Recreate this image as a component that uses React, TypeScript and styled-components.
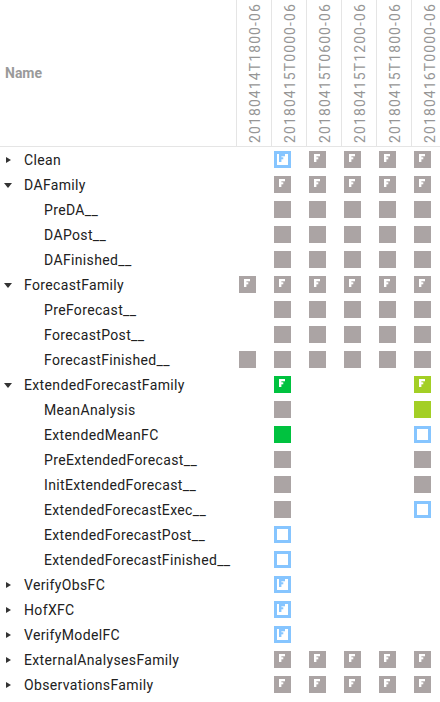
import styled, { createGlobalStyle } from "styled-components";

const GlobalStyle = createGlobalStyle`
  html, body {
    margin: 0;
    padding: 0;
    background: #ffffff;
    overflow: hidden;
  }
  body {
    font-family: Roboto, "Liberation Sans", sans-serif;
  }
`;

type Kind = "gray" | "green" | "lime" | "blue";
type Cell = { kind: Kind; flag?: boolean } | null;

const CYCLES = [
  "20180414T1800-06",
  "20180415T0000-06",
  "20180415T0600-06",
  "20180415T1200-06",
  "20180415T1800-06",
  "20180416T0000-06",
];

const g: Cell = { kind: "gray" };
const gF: Cell = { kind: "gray", flag: true };
const bF: Cell = { kind: "blue", flag: true };
const b: Cell = { kind: "blue" };
const grF: Cell = { kind: "green", flag: true };
const gr: Cell = { kind: "green" };
const lF: Cell = { kind: "lime", flag: true };
const l: Cell = { kind: "lime" };
const _ = null;

type Row = {
  name: string;
  depth: number;
  toggle?: "open" | "closed";
  cells: Cell[];
};

const ROWS: Row[] = [
  { name: "Clean", depth: 0, toggle: "closed", cells: [_, bF, gF, gF, gF, gF] },
  { name: "DAFamily", depth: 0, toggle: "open", cells: [_, gF, gF, gF, gF, gF] },
  { name: "PreDA__", depth: 1, cells: [_, g, g, g, g, g] },
  { name: "DAPost__", depth: 1, cells: [_, g, g, g, g, g] },
  { name: "DAFinished__", depth: 1, cells: [_, g, g, g, g, g] },
  { name: "ForecastFamily", depth: 0, toggle: "open", cells: [gF, gF, gF, gF, gF, gF] },
  { name: "PreForecast__", depth: 1, cells: [_, g, g, g, g, g] },
  { name: "ForecastPost__", depth: 1, cells: [_, g, g, g, g, g] },
  { name: "ForecastFinished__", depth: 1, cells: [g, g, g, g, g, g] },
  { name: "ExtendedForecastFamily", depth: 0, toggle: "open", cells: [_, grF, _, _, _, lF] },
  { name: "MeanAnalysis", depth: 1, cells: [_, g, _, _, _, l] },
  { name: "ExtendedMeanFC", depth: 1, cells: [_, gr, _, _, _, b] },
  { name: "PreExtendedForecast__", depth: 1, cells: [_, g, _, _, _, g] },
  { name: "InitExtendedForecast__", depth: 1, cells: [_, g, _, _, _, g] },
  { name: "ExtendedForecastExec__", depth: 1, cells: [_, g, _, _, _, b] },
  { name: "ExtendedForecastPost__", depth: 1, cells: [_, b, _, _, _, _] },
  { name: "ExtendedForecastFinished__", depth: 1, cells: [_, b, _, _, _, _] },
  { name: "VerifyObsFC", depth: 0, toggle: "closed", cells: [_, bF, _, _, _, _] },
  { name: "HofXFC", depth: 0, toggle: "closed", cells: [_, bF, _, _, _, _] },
  { name: "VerifyModelFC", depth: 0, toggle: "closed", cells: [_, bF, _, _, _, _] },
  { name: "ExternalAnalysesFamily", depth: 0, toggle: "closed", cells: [_, gF, gF, gF, gF, gF] },
  { name: "ObservationsFamily", depth: 0, toggle: "closed", cells: [_, gF, gF, gF, gF, gF] },
];

const FILL: Record<Kind, string> = {
  gray: "#aba4a4",
  green: "#00c23f",
  lime: "#a3cf25",
  blue: "#ffffff",
};

const Table = styled.div`
  width: 446px;
`;

const Header = styled.div`
  display: grid;
  grid-template-columns: 236px repeat(6, 35px);
  height: 146px;
  border-bottom: 1px solid #e5e5e5;
`;

const NameHead = styled.div`
  display: flex;
  align-items: center;
  padding-left: 5px;
  font-size: 14px;
  font-weight: 700;
  color: #9a9a9a;
`;

const CycleHead = styled.div`
  display: flex;
  justify-content: center;
  align-items: flex-end;
  border-left: 1px solid #e5e5e5;
  overflow: hidden;
  padding-bottom: 3px;
  box-sizing: border-box;
`;

const CycleLabel = styled.span`
  writing-mode: vertical-rl;
  transform: rotate(180deg);
  font-size: 14px;
  letter-spacing: 1.1px;
  color: #969696;
  white-space: nowrap;
  margin-left: 1px;
`;

const BodyRow = styled.div`
  display: grid;
  grid-template-columns: 236px repeat(6, 35px);
  height: 25px;
  align-items: center;
`;

const NameCell = styled.div<{ $depth: number }>`
  display: flex;
  align-items: center;
  padding-left: ${(p) => 5 + p.$depth * 20}px;
  font-size: 14px;
  letter-spacing: 0.35px;
  color: #212121;
  white-space: nowrap;
`;

const ToggleSlot = styled.span`
  display: inline-flex;
  align-items: center;
  width: 19px;
  height: 10px;
  flex: none;
`;

const Caret = styled.span<{ $open: boolean }>`
  display: block;
  width: 0;
  height: 0;
  ${(p) =>
    p.$open
      ? `border-top: 5px solid #333; border-left: 4px solid transparent; border-right: 4px solid transparent; margin-left: -1px; margin-top: 1px;`
      : `border-left: 5px solid #333; border-top: 3.5px solid transparent; border-bottom: 3.5px solid transparent; margin-left: 1px;`}
`;

const StatusCell = styled.div`
  display: flex;
  align-items: center;
  padding-left: 3px;
`;

const Square = styled.div<{ $kind: Kind }>`
  box-sizing: border-box;
  width: 17px;
  height: 17px;
  background: ${(p) => FILL[p.$kind]};
  border: ${(p) => (p.$kind === "blue" ? "3px solid #86c5ff" : "none")};
  position: relative;
`;

const FlagGlyph = styled.svg<{ $inset: number }>`
  position: absolute;
  left: ${(p) => -p.$inset}px;
  top: ${(p) => -p.$inset}px;
`;

function Status({ cell }: { cell: Cell }) {
  if (!cell) return <StatusCell />;
  const isBlue = cell.kind === "blue";
  const color = isBlue ? "#86c5ff" : "#ffffff";
  return (
    <StatusCell>
      <Square $kind={cell.kind}>
        {cell.flag && (
          <FlagGlyph
            $inset={isBlue ? 3 : 0}
            width="17"
            height="17"
            viewBox="0 0 17 17"
          >
            <rect x="5" y="3" width="2.4" height="8" fill={color} />
            <rect x="5" y="3" width="6" height="2.3" fill={color} />
            <rect x="5" y="6.3" width="4.3" height="2" fill={color} />
          </FlagGlyph>
        )}
      </Square>
    </StatusCell>
  );
}

export default function App() {
  return (
    <>
      <GlobalStyle />
      <Table>
        <Header>
          <NameHead>Name</NameHead>
          {CYCLES.map((c) => (
            <CycleHead key={c}>
              <CycleLabel>{c}</CycleLabel>
            </CycleHead>
          ))}
        </Header>
        {ROWS.map((r) => (
          <BodyRow key={r.name}>
            <NameCell $depth={r.depth}>
              <ToggleSlot>
                {r.toggle && <Caret $open={r.toggle === "open"} />}
              </ToggleSlot>
              {r.name}
            </NameCell>
            {r.cells.map((c, i) => (
              <Status key={i} cell={c} />
            ))}
          </BodyRow>
        ))}
      </Table>
    </>
  );
}
